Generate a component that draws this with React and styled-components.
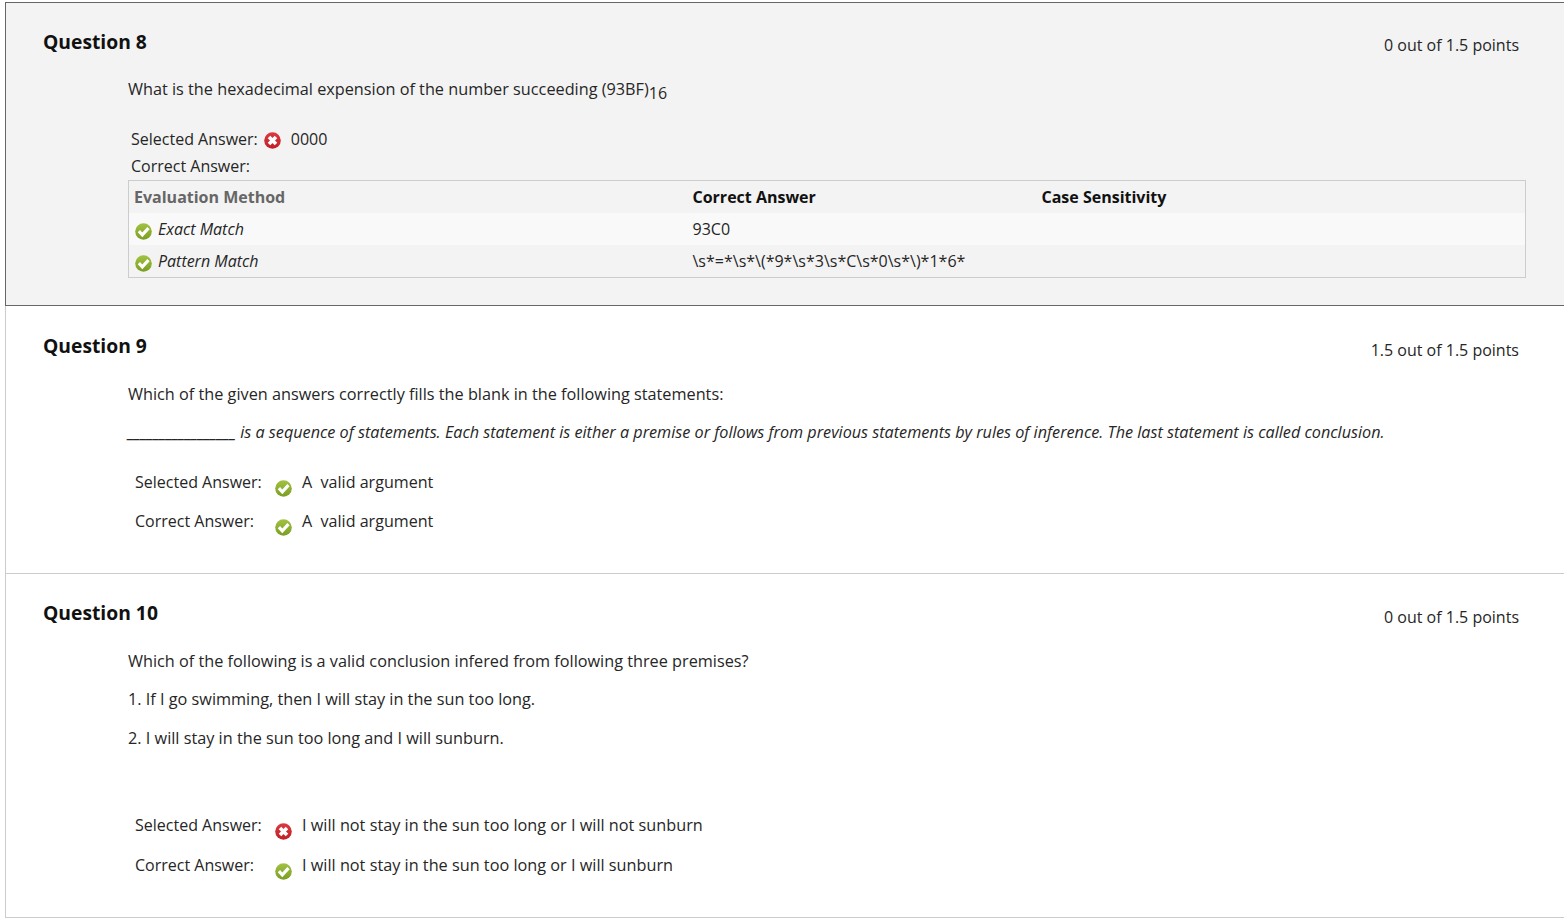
import React from 'react'
import styled, { createGlobalStyle } from 'styled-components'

const Global = createGlobalStyle`
  html, body { margin: 0; background: #fff; }
  body {
    font-family: "Open Sans", "Liberation Sans", sans-serif;
    font-size: 16px;
    color: #262626;
    overflow: hidden;
  }
`

const Page = styled.div`
  width: 1564px;
  height: 923px;
  padding: 2px 0 0 5px;
  box-sizing: border-box;
  overflow: hidden;
`

const Question = styled.section`
  box-sizing: border-box;
  height: ${p => p.$height}px;
  padding: ${p => p.$top}px 45px 0 37px;
  border-left: 1px solid ${p => (p.$wrong ? '#666' : '#ccc')};
  border-top: ${p => (p.$wrong ? '1px solid #666' : 'none')};
  border-bottom: 1px solid ${p => (p.$wrong ? '#666' : '#ccc')};
  background: ${p => (p.$wrong ? '#f3f3f3' : '#fff')};
`

const Header = styled.header`
  display: flex;
  justify-content: space-between;
  align-items: flex-start;
  height: 28px;
`

const Title = styled.h2`
  margin: 0;
  font-size: 19.3px;
  line-height: 28px;
  font-weight: 700;
  color: #111;
`

const Points = styled.div`
  line-height: 22px;
  margin-top: ${p => p.$offset}px;
`

const Body = styled.div`
  margin: ${p => p.$top}px 0 0 85px;
`

const Para = styled.p`
  margin: 0 0 ${p => p.$gap ?? 16}px;
  line-height: 22px;
  font-size: ${p => (p.$italic ? '16.2px' : '16.25px')};
  font-style: ${p => (p.$italic ? 'italic' : 'normal')};
  white-space: nowrap;
`

const Sub = styled.sub`
  font-size: 16px;
  line-height: 0;
  vertical-align: -4px;
`

const InlineRow = styled.div`
  display: flex;
  align-items: center;
  height: 27px;
  padding-left: 3px;
  gap: 6px;
`

const Value = styled.span`
  margin-left: 4px;
`

const RaisedIcon = styled.span`
  display: flex;
  margin-top: 4px;
`

const AnswerTable = styled.table`
  width: 1398px;
  margin-top: 1px;
  border: 1px solid #ccc;
  border-collapse: collapse;
  table-layout: fixed;
`

const HeadCell = styled.th`
  height: 32px;
  padding: 0 0 0 ${p => (p.$muted ? 5 : 6)}px;
  text-align: left;
  font-size: 16px;
  font-weight: 700;
  color: ${p => (p.$muted ? '#666' : '#111')};
`

const Row = styled.tr`
  background: ${p => (p.$light ? '#f9f9f9' : '#f3f3f3')};
`

const Cell = styled.td`
  height: 32px;
  padding: 0 0 0 6px;
`

const Method = styled.span`
  display: flex;
  align-items: center;
  gap: 6px;
  font-style: italic;
`

const AnswerGrid = styled.div`
  display: grid;
  grid-template-columns: 140px 27px auto;
  justify-content: start;
  padding-left: 7px;
  margin-top: ${p => p.$top}px;
  row-gap: ${p => p.$gap}px;
  line-height: 22px;
`

const IconCell = styled.span`
  display: flex;
  align-items: flex-end;
  height: 26px;
`

const Answer = styled.span`
  white-space: pre;
  font-size: ${p => p.$size}px;
`

const CheckIcon = ({ id }) => (
  <svg width="17" height="17" viewBox="0 0 17 17" style={{ flex: 'none' }}>
    <defs>
      <linearGradient id={id} x1="0" y1="0" x2="0" y2="1">
        <stop offset="0" stopColor="#a3c243" />
        <stop offset="1" stopColor="#7a9e22" />
      </linearGradient>
    </defs>
    <circle cx="8.5" cy="8.5" r="8.3" fill={`url(#${id})`} />
    <path d="M3.9 8.2 7.3 11.8 13.5 5.2" fill="none" stroke="#fff" strokeWidth="3.2" />
  </svg>
)

const CrossIcon = ({ id }) => (
  <svg width="17" height="17" viewBox="0 0 17 17" style={{ flex: 'none' }}>
    <defs>
      <linearGradient id={id} x1="0" y1="0" x2="0" y2="1">
        <stop offset="0" stopColor="#dc3a40" />
        <stop offset="1" stopColor="#c01f28" />
      </linearGradient>
    </defs>
    <circle cx="8.5" cy="8.5" r="8.3" fill={`url(#${id})`} />
    <path d="M5 5 12 12M12 5 5 12" fill="none" stroke="#fff" strokeWidth="3.6" />
  </svg>
)

const Answers = ({ name, top, gap, size, selected, correct, wrong }) => (
  <AnswerGrid $top={top} $gap={gap}>
    <span>Selected Answer:</span>
    <IconCell>{wrong ? <CrossIcon id={`${name}-s`} /> : <CheckIcon id={`${name}-s`} />}</IconCell>
    <Answer $size={size}>{selected}</Answer>
    <span>Correct Answer:</span>
    <IconCell><CheckIcon id={`${name}-c`} /></IconCell>
    <Answer $size={size}>{correct}</Answer>
  </AnswerGrid>
)

export default function App() {
  return (
    <Page>
      <Global />
      <Question $wrong $height={304} $top={25}>
        <Header>
          <Title>Question 8</Title>
          <Points $offset={6}>0 out of 1.5 points</Points>
        </Header>
        <Body $top={22}>
          <Para $gap={25}>What is the hexadecimal expension of the number succeeding (93BF)<Sub>16</Sub></Para>
          <InlineRow>
            <span>Selected Answer:</span>
            <RaisedIcon><CrossIcon id="q8-cross" /></RaisedIcon>
            <Value>0000</Value>
          </InlineRow>
          <InlineRow>Correct Answer:</InlineRow>
          <AnswerTable>
            <colgroup>
              <col style={{ width: 558 }} />
              <col style={{ width: 349 }} />
              <col />
            </colgroup>
            <thead>
              <tr>
                <HeadCell $muted>Evaluation Method</HeadCell>
                <HeadCell>Correct Answer</HeadCell>
                <HeadCell>Case Sensitivity</HeadCell>
              </tr>
            </thead>
            <tbody>
              <Row $light>
                <Cell><Method><RaisedIcon><CheckIcon id="q8-exact" /></RaisedIcon>Exact Match</Method></Cell>
                <Cell>93C0</Cell>
                <Cell />
              </Row>
              <Row>
                <Cell><Method><RaisedIcon><CheckIcon id="q8-pattern" /></RaisedIcon>Pattern Match</Method></Cell>
                <Cell>{'\\s*=*\\s*\\(*9*\\s*3\\s*C\\s*0\\s*\\)*1*6*'}</Cell>
                <Cell />
              </Row>
            </tbody>
          </AnswerTable>
        </Body>
      </Question>

      <Question $height={268} $top={26}>
        <Header>
          <Title>Question 9</Title>
          <Points $offset={7}>1.5 out of 1.5 points</Points>
        </Header>
        <Body $top={23}>
          <Para>Which of the given answers correctly fills the blank in the following statements:</Para>
          <Para $italic>_________________ is a sequence of statements. Each statement is either a premise or follows from previous statements by rules of inference. The last statement is called conclusion.</Para>
          <Answers name="q9" size={16.1} top={28} gap={13} selected="A  valid argument" correct="A  valid argument" />
        </Body>
      </Question>

      <Question $height={344} $top={25}>
        <Header>
          <Title>Question 10</Title>
          <Points $offset={7}>0 out of 1.5 points</Points>
        </Header>
        <Body $top={23}>
          <Para>Which of the following is a valid conclusion infered from following three premises?</Para>
          <Para $gap={17}>1. If I go swimming, then I will stay in the sun too long.</Para>
          <Para>2. I will stay in the sun too long and I will sunburn.</Para>
          <Answers
            name="q10"
            size={16.25}
            top={65}
            gap={14}
            wrong
            selected="I will not stay in the sun too long or I will not sunburn"
            correct="I will not stay in the sun too long or I will sunburn"
          />
        </Body>
      </Question>
    </Page>
  )
}
